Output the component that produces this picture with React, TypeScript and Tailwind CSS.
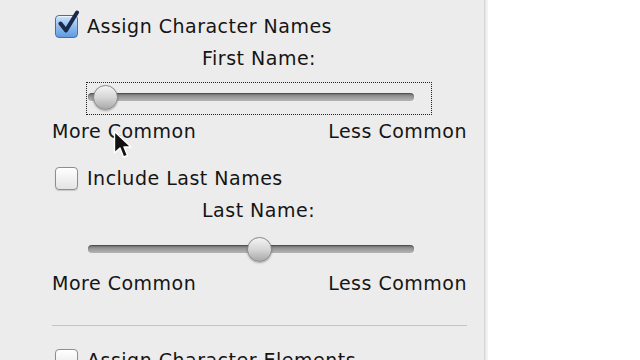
import React from 'react';

const font = { fontFamily: '"DejaVu Sans", "Liberation Sans", sans-serif' };

const Checkbox = ({ checked }: { checked?: boolean }) => (
  <div className="relative w-[23px] h-[23px] shrink-0">
    {checked ? (
      <div className="w-full h-full rounded-[4px] border border-[#4a6d9c] bg-gradient-to-b from-[#cde3fb] via-[#8fbcef] to-[#5f9be0] shadow-[inset_0_1px_1px_rgba(255,255,255,0.7)]" />
    ) : (
      <div className="w-full h-full rounded-[4px] border border-[#8e8e8e] bg-gradient-to-b from-[#ffffff] to-[#e4e4e4] shadow-[0_1px_1px_rgba(0,0,0,0.15)]" />
    )}
    {checked && (
      <svg className="absolute left-[2px] top-[-5px]" width="24" height="26" viewBox="0 0 24 26">
        <path d="M3.5 13.5 L9 20.5 L20 2.5" fill="none" stroke="#1b2a4a" strokeWidth="4" strokeLinecap="round" strokeLinejoin="round" />
      </svg>
    )}
  </div>
);

const Slider = ({ pos, focused }: { pos: number; focused?: boolean }) => (
  <div className={`relative w-[346px] h-[33px] ml-[34px] ${focused ? 'border border-dotted border-[#222]' : 'border border-transparent'}`}>
    <div className="absolute left-[1px] top-[10px] w-[326px] h-[8px] rounded-full bg-gradient-to-b from-[#6e6e6e] via-[#9a9a9a] to-[#b4b4b4] shadow-[inset_0_1px_1px_rgba(0,0,0,0.35)]" />
    <div
      className="absolute top-[2px] w-[25px] h-[25px] rounded-full border border-[#8a8a8a] bg-gradient-to-b from-[#f4f4f4] via-[#d6d6d6] to-[#a9a9a9] shadow-[0_1px_2px_rgba(0,0,0,0.3)]"
      style={{ left: pos }}
    />
  </div>
);

const Labels = () => (
  <div className="flex justify-between w-[415px] h-[24px] items-center">
    <span>More Common</span>
    <span>Less Common</span>
  </div>
);

export default function App() {
  return (
    <div className="relative flex w-[640px] h-[360px] overflow-hidden bg-white text-[19px] tracking-[0.5px] text-[#151515]" style={font}>
      <div className="w-[484px] h-full bg-[#ececec] flex flex-col pl-[52px] pt-[14px]">
        <div className="flex items-center gap-[9px] h-[24px] ml-[3px]">
          <Checkbox checked />
          <span>Assign Character Names</span>
        </div>
        <div className="mt-[8px] h-[24px] w-[415px] flex items-center pl-[150px]">First Name:</div>
        <div className="mt-[12px]">
          <Slider pos={6} focused />
        </div>
        <div className="mt-[4px]">
          <Labels />
        </div>
        <div className="mt-[23px] flex items-center gap-[9px] h-[24px] ml-[3px]">
          <Checkbox />
          <span>Include Last Names</span>
        </div>
        <div className="mt-[8px] h-[24px] w-[415px] flex items-center pl-[150px]">Last Name:</div>
        <div className="mt-[12px]">
          <Slider pos={160} />
        </div>
        <div className="mt-[4px]">
          <Labels />
        </div>
        <div className="mt-[30px] w-[415px] h-[2px] border-t border-[#c4c4c4] border-b-white" />
        <div className="mt-[22px] flex items-center gap-[9px] h-[24px] ml-[3px]">
          <Checkbox />
          <span>Assign Character Elements</span>
        </div>
      </div>
      <div className="w-[1px] h-full bg-[#d6d6d6]" />
      <div className="w-[1px] h-full bg-[#e4e4e4]" />
      <div className="w-[2px] h-full bg-[#f3f3f3]" />
      <div className="flex-1 h-full bg-white" />
      <svg className="absolute left-[113px] top-[130px]" width="22" height="30" viewBox="0 0 22 30">
        <path d="M1.5 1.5 L1.5 23 L7 18 L10.5 27 L14.5 25.5 L11 17 L18 17 Z" fill="#111" stroke="#fff" strokeWidth="1.4" strokeLinejoin="round" />
      </svg>
    </div>
  );
}
